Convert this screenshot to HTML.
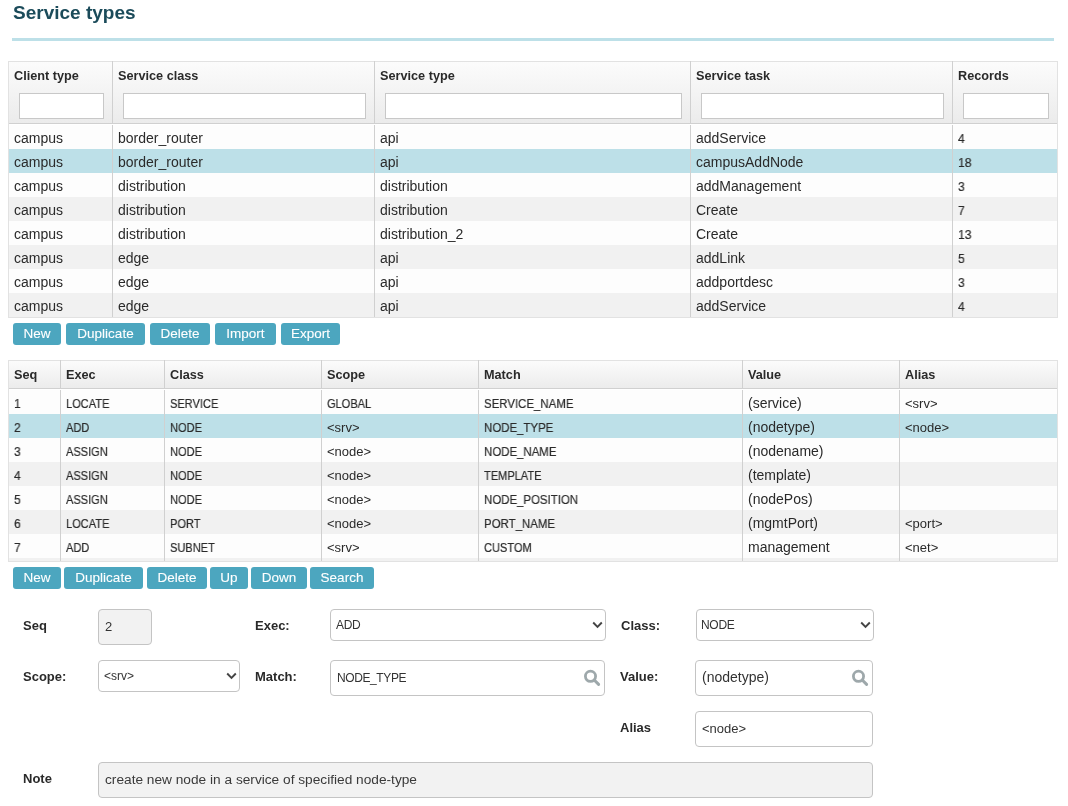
<!DOCTYPE html>
<html><head><meta charset="utf-8"><style>
html,body{margin:0;padding:0;background:#fff;width:1068px;height:806px;overflow:hidden;position:relative;}
body{font-family:"Liberation Sans",sans-serif;}
.a{position:absolute;}
.t{position:absolute;white-space:nowrap;line-height:20px;will-change:transform;}
.btn{position:absolute;height:22px;line-height:22px;background:#4ca6bf;color:#fff;border-radius:3px;text-align:center;font-size:13.5px;font-family:"Liberation Sans",sans-serif;-webkit-text-stroke:0.1px #fff;will-change:transform;}
</style></head><body>
<div class="t" style="left:13px;top:2.5px;font-size:19px;font-weight:bold;color:#1b4b5a;">Service types</div>
<div class="a" style="left:12px;top:38px;width:1042px;height:3px;background:#bde0e8;"></div>
<div class="a" style="left:8px;top:61px;width:1050px;height:63px;background:linear-gradient(#fcfcfc,#ebebeb);"></div>
<div class="a" style="left:8px;top:61px;width:1050px;height:1px;background:#e2e2e2;"></div>
<div class="a" style="left:8px;top:123px;width:1050px;height:1px;background:#d0d0d0;"></div>
<div class="a" style="left:8px;top:61px;width:1px;height:63px;background:#e2e2e2;"></div>
<div class="a" style="left:1057px;top:61px;width:1px;height:63px;background:#e2e2e2;"></div>
<div class="a" style="left:9px;top:124px;width:1048px;height:1px;background:#fff;"></div>
<div class="a" style="left:112px;top:61px;width:1px;height:63px;background:#d0d0d0;"></div>
<div class="a" style="left:374px;top:61px;width:1px;height:63px;background:#d0d0d0;"></div>
<div class="a" style="left:690px;top:61px;width:1px;height:63px;background:#d0d0d0;"></div>
<div class="a" style="left:952px;top:61px;width:1px;height:63px;background:#d0d0d0;"></div>
<div class="t" style="left:14px;top:66.0px;font-size:12.7px;font-weight:bold;color:#2a2a2a;">Client type</div>
<div class="a" style="left:19px;top:93px;width:85px;height:26px;background:#fff;border:1px solid #c8c8c8;box-sizing:border-box;"></div>
<div class="t" style="left:118px;top:66.0px;font-size:12.7px;font-weight:bold;color:#2a2a2a;">Service class</div>
<div class="a" style="left:123px;top:93px;width:243px;height:26px;background:#fff;border:1px solid #c8c8c8;box-sizing:border-box;"></div>
<div class="t" style="left:380px;top:66.0px;font-size:12.7px;font-weight:bold;color:#2a2a2a;">Service type</div>
<div class="a" style="left:385px;top:93px;width:297px;height:26px;background:#fff;border:1px solid #c8c8c8;box-sizing:border-box;"></div>
<div class="t" style="left:696px;top:66.0px;font-size:12.7px;font-weight:bold;color:#2a2a2a;">Service task</div>
<div class="a" style="left:701px;top:93px;width:243px;height:26px;background:#fff;border:1px solid #c8c8c8;box-sizing:border-box;"></div>
<div class="t" style="left:958px;top:66.0px;font-size:12.7px;font-weight:bold;color:#2a2a2a;">Records</div>
<div class="a" style="left:963px;top:93px;width:86px;height:26px;background:#fff;border:1px solid #c8c8c8;box-sizing:border-box;"></div>
<div class="a" style="left:8px;top:125px;width:1050px;height:24px;background:#fdfdfd;"></div>
<div class="t" style="left:14px;top:128.0px;font-size:14px;color:#2a2a2a;">campus</div>
<div class="t" style="left:118px;top:128.0px;font-size:14px;color:#2a2a2a;">border_router</div>
<div class="t" style="left:380px;top:128.0px;font-size:14px;color:#2a2a2a;">api</div>
<div class="t" style="left:696px;top:128.0px;font-size:14px;color:#2a2a2a;">addService</div>
<div class="t" style="left:958px;top:128.5px;font-size:13.5px;color:#2a2a2a;transform:scaleX(.9);transform-origin:0 0;-webkit-text-stroke:0.2px #2a2a2a;">4</div>
<div class="a" style="left:8px;top:149px;width:1050px;height:24px;background:#bde0e8;"></div>
<div class="t" style="left:14px;top:152.0px;font-size:14px;color:#2a2a2a;">campus</div>
<div class="t" style="left:118px;top:152.0px;font-size:14px;color:#2a2a2a;">border_router</div>
<div class="t" style="left:380px;top:152.0px;font-size:14px;color:#2a2a2a;">api</div>
<div class="t" style="left:696px;top:152.0px;font-size:14px;color:#2a2a2a;">campusAddNode</div>
<div class="t" style="left:958px;top:152.5px;font-size:13.5px;color:#2a2a2a;transform:scaleX(.9);transform-origin:0 0;-webkit-text-stroke:0.2px #2a2a2a;">18</div>
<div class="a" style="left:8px;top:173px;width:1050px;height:24px;background:#fdfdfd;"></div>
<div class="t" style="left:14px;top:176.0px;font-size:14px;color:#2a2a2a;">campus</div>
<div class="t" style="left:118px;top:176.0px;font-size:14px;color:#2a2a2a;">distribution</div>
<div class="t" style="left:380px;top:176.0px;font-size:14px;color:#2a2a2a;">distribution</div>
<div class="t" style="left:696px;top:176.0px;font-size:14px;color:#2a2a2a;">addManagement</div>
<div class="t" style="left:958px;top:176.5px;font-size:13.5px;color:#2a2a2a;transform:scaleX(.9);transform-origin:0 0;-webkit-text-stroke:0.2px #2a2a2a;">3</div>
<div class="a" style="left:8px;top:197px;width:1050px;height:24px;background:#f1f1f1;"></div>
<div class="t" style="left:14px;top:200.0px;font-size:14px;color:#2a2a2a;">campus</div>
<div class="t" style="left:118px;top:200.0px;font-size:14px;color:#2a2a2a;">distribution</div>
<div class="t" style="left:380px;top:200.0px;font-size:14px;color:#2a2a2a;">distribution</div>
<div class="t" style="left:696px;top:200.0px;font-size:14px;color:#2a2a2a;">Create</div>
<div class="t" style="left:958px;top:200.5px;font-size:13.5px;color:#2a2a2a;transform:scaleX(.9);transform-origin:0 0;-webkit-text-stroke:0.2px #2a2a2a;">7</div>
<div class="a" style="left:8px;top:221px;width:1050px;height:24px;background:#fdfdfd;"></div>
<div class="t" style="left:14px;top:224.0px;font-size:14px;color:#2a2a2a;">campus</div>
<div class="t" style="left:118px;top:224.0px;font-size:14px;color:#2a2a2a;">distribution</div>
<div class="t" style="left:380px;top:224.0px;font-size:14px;color:#2a2a2a;">distribution_2</div>
<div class="t" style="left:696px;top:224.0px;font-size:14px;color:#2a2a2a;">Create</div>
<div class="t" style="left:958px;top:224.5px;font-size:13.5px;color:#2a2a2a;transform:scaleX(.9);transform-origin:0 0;-webkit-text-stroke:0.2px #2a2a2a;">13</div>
<div class="a" style="left:8px;top:245px;width:1050px;height:24px;background:#f1f1f1;"></div>
<div class="t" style="left:14px;top:248.0px;font-size:14px;color:#2a2a2a;">campus</div>
<div class="t" style="left:118px;top:248.0px;font-size:14px;color:#2a2a2a;">edge</div>
<div class="t" style="left:380px;top:248.0px;font-size:14px;color:#2a2a2a;">api</div>
<div class="t" style="left:696px;top:248.0px;font-size:14px;color:#2a2a2a;">addLink</div>
<div class="t" style="left:958px;top:248.5px;font-size:13.5px;color:#2a2a2a;transform:scaleX(.9);transform-origin:0 0;-webkit-text-stroke:0.2px #2a2a2a;">5</div>
<div class="a" style="left:8px;top:269px;width:1050px;height:24px;background:#fdfdfd;"></div>
<div class="t" style="left:14px;top:272.0px;font-size:14px;color:#2a2a2a;">campus</div>
<div class="t" style="left:118px;top:272.0px;font-size:14px;color:#2a2a2a;">edge</div>
<div class="t" style="left:380px;top:272.0px;font-size:14px;color:#2a2a2a;">api</div>
<div class="t" style="left:696px;top:272.0px;font-size:14px;color:#2a2a2a;">addportdesc</div>
<div class="t" style="left:958px;top:272.5px;font-size:13.5px;color:#2a2a2a;transform:scaleX(.9);transform-origin:0 0;-webkit-text-stroke:0.2px #2a2a2a;">3</div>
<div class="a" style="left:8px;top:293px;width:1050px;height:24px;background:#f1f1f1;"></div>
<div class="t" style="left:14px;top:296.0px;font-size:14px;color:#2a2a2a;">campus</div>
<div class="t" style="left:118px;top:296.0px;font-size:14px;color:#2a2a2a;">edge</div>
<div class="t" style="left:380px;top:296.0px;font-size:14px;color:#2a2a2a;">api</div>
<div class="t" style="left:696px;top:296.0px;font-size:14px;color:#2a2a2a;">addService</div>
<div class="t" style="left:958px;top:296.5px;font-size:13.5px;color:#2a2a2a;transform:scaleX(.9);transform-origin:0 0;-webkit-text-stroke:0.2px #2a2a2a;">4</div>
<div class="a" style="left:8px;top:123px;width:1px;height:195px;background:#e2e2e2;"></div>
<div class="a" style="left:1057px;top:123px;width:1px;height:195px;background:#e2e2e2;"></div>
<div class="a" style="left:8px;top:317px;width:1050px;height:1px;background:#e2e2e2;"></div>
<div class="a" style="left:112px;top:125px;width:1px;height:192px;background:#d0d0d0;"></div>
<div class="a" style="left:374px;top:125px;width:1px;height:192px;background:#d0d0d0;"></div>
<div class="a" style="left:690px;top:125px;width:1px;height:192px;background:#d0d0d0;"></div>
<div class="a" style="left:952px;top:125px;width:1px;height:192px;background:#d0d0d0;"></div>
<div class="btn" style="left:13px;top:323px;width:48px;">New</div>
<div class="btn" style="left:66px;top:323px;width:79px;">Duplicate</div>
<div class="btn" style="left:150px;top:323px;width:60px;">Delete</div>
<div class="btn" style="left:215px;top:323px;width:61px;">Import</div>
<div class="btn" style="left:281px;top:323px;width:59px;">Export</div>
<div class="a" style="left:8px;top:360px;width:1050px;height:29px;background:linear-gradient(#fcfcfc,#ebebeb);"></div>
<div class="a" style="left:8px;top:360px;width:1050px;height:1px;background:#e2e2e2;"></div>
<div class="a" style="left:8px;top:388px;width:1050px;height:1px;background:#d0d0d0;"></div>
<div class="a" style="left:8px;top:360px;width:1px;height:29px;background:#e2e2e2;"></div>
<div class="a" style="left:1057px;top:360px;width:1px;height:29px;background:#e2e2e2;"></div>
<div class="a" style="left:9px;top:389px;width:1048px;height:1px;background:#fff;"></div>
<div class="a" style="left:60px;top:360px;width:1px;height:29px;background:#d0d0d0;"></div>
<div class="a" style="left:164px;top:360px;width:1px;height:29px;background:#d0d0d0;"></div>
<div class="a" style="left:321px;top:360px;width:1px;height:29px;background:#d0d0d0;"></div>
<div class="a" style="left:478px;top:360px;width:1px;height:29px;background:#d0d0d0;"></div>
<div class="a" style="left:742px;top:360px;width:1px;height:29px;background:#d0d0d0;"></div>
<div class="a" style="left:899px;top:360px;width:1px;height:29px;background:#d0d0d0;"></div>
<div class="t" style="left:14px;top:365.0px;font-size:12.7px;font-weight:bold;color:#2a2a2a;">Seq</div>
<div class="t" style="left:66px;top:365.0px;font-size:12.7px;font-weight:bold;color:#2a2a2a;">Exec</div>
<div class="t" style="left:170px;top:365.0px;font-size:12.7px;font-weight:bold;color:#2a2a2a;">Class</div>
<div class="t" style="left:327px;top:365.0px;font-size:12.7px;font-weight:bold;color:#2a2a2a;">Scope</div>
<div class="t" style="left:484px;top:365.0px;font-size:12.7px;font-weight:bold;color:#2a2a2a;">Match</div>
<div class="t" style="left:748px;top:365.0px;font-size:12.7px;font-weight:bold;color:#2a2a2a;">Value</div>
<div class="t" style="left:905px;top:365.0px;font-size:12.7px;font-weight:bold;color:#2a2a2a;">Alias</div>
<div class="a" style="left:8px;top:390px;width:1050px;height:24px;background:#fdfdfd;"></div>
<div class="t" style="left:14px;top:393.5px;font-size:13.5px;color:#2a2a2a;transform:scaleX(.9);transform-origin:0 0;-webkit-text-stroke:0.2px #2a2a2a;">1</div>
<div class="t" style="left:66px;top:393.5px;font-size:13px;color:#2a2a2a;transform:scaleX(0.85);transform-origin:0 0;-webkit-text-stroke:0.2px #2a2a2a;">LOCATE</div>
<div class="t" style="left:170px;top:393.5px;font-size:13px;color:#2a2a2a;transform:scaleX(0.85);transform-origin:0 0;-webkit-text-stroke:0.2px #2a2a2a;">SERVICE</div>
<div class="t" style="left:327px;top:393.5px;font-size:13px;color:#2a2a2a;transform:scaleX(0.85);transform-origin:0 0;-webkit-text-stroke:0.2px #2a2a2a;">GLOBAL</div>
<div class="t" style="left:484px;top:393.5px;font-size:13px;color:#2a2a2a;transform:scaleX(0.88);transform-origin:0 0;-webkit-text-stroke:0.2px #2a2a2a;">SERVICE_NAME</div>
<div class="t" style="left:748px;top:393.0px;font-size:14px;color:#2a2a2a;">(service)</div>
<div class="t" style="left:905px;top:393.5px;font-size:13px;color:#2a2a2a;">&lt;srv&gt;</div>
<div class="a" style="left:8px;top:414px;width:1050px;height:24px;background:#bde0e8;"></div>
<div class="t" style="left:14px;top:417.5px;font-size:13.5px;color:#2a2a2a;transform:scaleX(.9);transform-origin:0 0;-webkit-text-stroke:0.2px #2a2a2a;">2</div>
<div class="t" style="left:66px;top:417.5px;font-size:13px;color:#2a2a2a;transform:scaleX(0.85);transform-origin:0 0;-webkit-text-stroke:0.2px #2a2a2a;">ADD</div>
<div class="t" style="left:170px;top:417.5px;font-size:13px;color:#2a2a2a;transform:scaleX(0.85);transform-origin:0 0;-webkit-text-stroke:0.2px #2a2a2a;">NODE</div>
<div class="t" style="left:327px;top:417.5px;font-size:13px;color:#2a2a2a;">&lt;srv&gt;</div>
<div class="t" style="left:484px;top:417.5px;font-size:13px;color:#2a2a2a;transform:scaleX(0.88);transform-origin:0 0;-webkit-text-stroke:0.2px #2a2a2a;">NODE_TYPE</div>
<div class="t" style="left:748px;top:417.0px;font-size:14px;color:#2a2a2a;">(nodetype)</div>
<div class="t" style="left:905px;top:417.5px;font-size:13px;color:#2a2a2a;">&lt;node&gt;</div>
<div class="a" style="left:8px;top:438px;width:1050px;height:24px;background:#fdfdfd;"></div>
<div class="t" style="left:14px;top:441.5px;font-size:13.5px;color:#2a2a2a;transform:scaleX(.9);transform-origin:0 0;-webkit-text-stroke:0.2px #2a2a2a;">3</div>
<div class="t" style="left:66px;top:441.5px;font-size:13px;color:#2a2a2a;transform:scaleX(0.85);transform-origin:0 0;-webkit-text-stroke:0.2px #2a2a2a;">ASSIGN</div>
<div class="t" style="left:170px;top:441.5px;font-size:13px;color:#2a2a2a;transform:scaleX(0.85);transform-origin:0 0;-webkit-text-stroke:0.2px #2a2a2a;">NODE</div>
<div class="t" style="left:327px;top:441.5px;font-size:13px;color:#2a2a2a;">&lt;node&gt;</div>
<div class="t" style="left:484px;top:441.5px;font-size:13px;color:#2a2a2a;transform:scaleX(0.88);transform-origin:0 0;-webkit-text-stroke:0.2px #2a2a2a;">NODE_NAME</div>
<div class="t" style="left:748px;top:441.0px;font-size:14px;color:#2a2a2a;">(nodename)</div>
<div class="t" style="left:905px;top:441.0px;font-size:14px;color:#2a2a2a;"></div>
<div class="a" style="left:8px;top:462px;width:1050px;height:24px;background:#f1f1f1;"></div>
<div class="t" style="left:14px;top:465.5px;font-size:13.5px;color:#2a2a2a;transform:scaleX(.9);transform-origin:0 0;-webkit-text-stroke:0.2px #2a2a2a;">4</div>
<div class="t" style="left:66px;top:465.5px;font-size:13px;color:#2a2a2a;transform:scaleX(0.85);transform-origin:0 0;-webkit-text-stroke:0.2px #2a2a2a;">ASSIGN</div>
<div class="t" style="left:170px;top:465.5px;font-size:13px;color:#2a2a2a;transform:scaleX(0.85);transform-origin:0 0;-webkit-text-stroke:0.2px #2a2a2a;">NODE</div>
<div class="t" style="left:327px;top:465.5px;font-size:13px;color:#2a2a2a;">&lt;node&gt;</div>
<div class="t" style="left:484px;top:465.5px;font-size:13px;color:#2a2a2a;transform:scaleX(0.85);transform-origin:0 0;-webkit-text-stroke:0.2px #2a2a2a;">TEMPLATE</div>
<div class="t" style="left:748px;top:465.0px;font-size:14px;color:#2a2a2a;">(template)</div>
<div class="t" style="left:905px;top:465.0px;font-size:14px;color:#2a2a2a;"></div>
<div class="a" style="left:8px;top:486px;width:1050px;height:24px;background:#fdfdfd;"></div>
<div class="t" style="left:14px;top:489.5px;font-size:13.5px;color:#2a2a2a;transform:scaleX(.9);transform-origin:0 0;-webkit-text-stroke:0.2px #2a2a2a;">5</div>
<div class="t" style="left:66px;top:489.5px;font-size:13px;color:#2a2a2a;transform:scaleX(0.85);transform-origin:0 0;-webkit-text-stroke:0.2px #2a2a2a;">ASSIGN</div>
<div class="t" style="left:170px;top:489.5px;font-size:13px;color:#2a2a2a;transform:scaleX(0.85);transform-origin:0 0;-webkit-text-stroke:0.2px #2a2a2a;">NODE</div>
<div class="t" style="left:327px;top:489.5px;font-size:13px;color:#2a2a2a;">&lt;node&gt;</div>
<div class="t" style="left:484px;top:489.5px;font-size:13px;color:#2a2a2a;transform:scaleX(0.88);transform-origin:0 0;-webkit-text-stroke:0.2px #2a2a2a;">NODE_POSITION</div>
<div class="t" style="left:748px;top:489.0px;font-size:14px;color:#2a2a2a;">(nodePos)</div>
<div class="t" style="left:905px;top:489.0px;font-size:14px;color:#2a2a2a;"></div>
<div class="a" style="left:8px;top:510px;width:1050px;height:24px;background:#f1f1f1;"></div>
<div class="t" style="left:14px;top:513.5px;font-size:13.5px;color:#2a2a2a;transform:scaleX(.9);transform-origin:0 0;-webkit-text-stroke:0.2px #2a2a2a;">6</div>
<div class="t" style="left:66px;top:513.5px;font-size:13px;color:#2a2a2a;transform:scaleX(0.85);transform-origin:0 0;-webkit-text-stroke:0.2px #2a2a2a;">LOCATE</div>
<div class="t" style="left:170px;top:513.5px;font-size:13px;color:#2a2a2a;transform:scaleX(0.85);transform-origin:0 0;-webkit-text-stroke:0.2px #2a2a2a;">PORT</div>
<div class="t" style="left:327px;top:513.5px;font-size:13px;color:#2a2a2a;">&lt;node&gt;</div>
<div class="t" style="left:484px;top:513.5px;font-size:13px;color:#2a2a2a;transform:scaleX(0.88);transform-origin:0 0;-webkit-text-stroke:0.2px #2a2a2a;">PORT_NAME</div>
<div class="t" style="left:748px;top:513.0px;font-size:14px;color:#2a2a2a;">(mgmtPort)</div>
<div class="t" style="left:905px;top:513.5px;font-size:13px;color:#2a2a2a;">&lt;port&gt;</div>
<div class="a" style="left:8px;top:534px;width:1050px;height:24px;background:#fdfdfd;"></div>
<div class="t" style="left:14px;top:537.5px;font-size:13.5px;color:#2a2a2a;transform:scaleX(.9);transform-origin:0 0;-webkit-text-stroke:0.2px #2a2a2a;">7</div>
<div class="t" style="left:66px;top:537.5px;font-size:13px;color:#2a2a2a;transform:scaleX(0.85);transform-origin:0 0;-webkit-text-stroke:0.2px #2a2a2a;">ADD</div>
<div class="t" style="left:170px;top:537.5px;font-size:13px;color:#2a2a2a;transform:scaleX(0.85);transform-origin:0 0;-webkit-text-stroke:0.2px #2a2a2a;">SUBNET</div>
<div class="t" style="left:327px;top:537.5px;font-size:13px;color:#2a2a2a;">&lt;srv&gt;</div>
<div class="t" style="left:484px;top:537.5px;font-size:13px;color:#2a2a2a;transform:scaleX(0.85);transform-origin:0 0;-webkit-text-stroke:0.2px #2a2a2a;">CUSTOM</div>
<div class="t" style="left:748px;top:537.0px;font-size:14px;color:#2a2a2a;">management</div>
<div class="t" style="left:905px;top:537.5px;font-size:13px;color:#2a2a2a;">&lt;net&gt;</div>
<div class="a" style="left:8px;top:558px;width:1050px;height:3px;background:#f1f1f1;"></div>
<div class="a" style="left:8px;top:388px;width:1px;height:174px;background:#e2e2e2;"></div>
<div class="a" style="left:1057px;top:388px;width:1px;height:174px;background:#e2e2e2;"></div>
<div class="a" style="left:8px;top:561px;width:1050px;height:1px;background:#e2e2e2;"></div>
<div class="a" style="left:60px;top:390px;width:1px;height:171px;background:#d0d0d0;"></div>
<div class="a" style="left:164px;top:390px;width:1px;height:171px;background:#d0d0d0;"></div>
<div class="a" style="left:321px;top:390px;width:1px;height:171px;background:#d0d0d0;"></div>
<div class="a" style="left:478px;top:390px;width:1px;height:171px;background:#d0d0d0;"></div>
<div class="a" style="left:742px;top:390px;width:1px;height:171px;background:#d0d0d0;"></div>
<div class="a" style="left:899px;top:390px;width:1px;height:171px;background:#d0d0d0;"></div>
<div class="btn" style="left:13px;top:567px;width:48px;">New</div>
<div class="btn" style="left:64px;top:567px;width:79px;">Duplicate</div>
<div class="btn" style="left:147px;top:567px;width:60px;">Delete</div>
<div class="btn" style="left:210px;top:567px;width:38px;">Up</div>
<div class="btn" style="left:251px;top:567px;width:56px;">Down</div>
<div class="btn" style="left:310px;top:567px;width:64px;">Search</div>
<div class="t" style="left:23px;top:615.5px;font-size:13px;font-weight:bold;color:#2a2a2a;">Seq</div>
<div class="t" style="left:255px;top:615.5px;font-size:13px;font-weight:bold;color:#2a2a2a;">Exec:</div>
<div class="t" style="left:621px;top:615.5px;font-size:13px;font-weight:bold;color:#2a2a2a;">Class:</div>
<div class="t" style="left:23px;top:666.5px;font-size:13px;font-weight:bold;color:#2a2a2a;">Scope:</div>
<div class="t" style="left:255px;top:666.5px;font-size:13px;font-weight:bold;color:#2a2a2a;">Match:</div>
<div class="t" style="left:620px;top:666.5px;font-size:13px;font-weight:bold;color:#2a2a2a;">Value:</div>
<div class="t" style="left:620px;top:717.5px;font-size:13px;font-weight:bold;color:#2a2a2a;">Alias</div>
<div class="t" style="left:23px;top:768.5px;font-size:13px;font-weight:bold;color:#2a2a2a;">Note</div>
<div class="a" style="left:98px;top:609px;width:54px;height:36px;background:#f2f2f2;border:1px solid #c4c4c4;border-radius:4px;box-sizing:border-box;"></div>
<div class="t" style="left:105px;top:616.5px;font-size:13px;color:#333;">2</div>
<div class="a" style="left:330px;top:609px;width:276px;height:32px;background:#fff;border:1px solid #c4c4c4;border-radius:4px;box-sizing:border-box;"></div>
<div class="t" style="left:336px;top:615.0px;font-size:12px;color:#333;letter-spacing:-0.3px;">ADD</div>
<svg class="a" style="left:591.5px;top:621px" width="11" height="8" viewBox="0 0 11 8"><path d="M1.2 1.5 L5.5 5.8 L9.8 1.5" fill="none" stroke="#444" stroke-width="1.9"/></svg>
<div class="a" style="left:696px;top:609px;width:178px;height:32px;background:#fff;border:1px solid #c4c4c4;border-radius:4px;box-sizing:border-box;"></div>
<div class="t" style="left:701px;top:615.0px;font-size:12px;color:#333;letter-spacing:-0.3px;">NODE</div>
<svg class="a" style="left:859.5px;top:621px" width="11" height="8" viewBox="0 0 11 8"><path d="M1.2 1.5 L5.5 5.8 L9.8 1.5" fill="none" stroke="#444" stroke-width="1.9"/></svg>
<div class="a" style="left:98px;top:660px;width:142px;height:32px;background:#fff;border:1px solid #c4c4c4;border-radius:4px;box-sizing:border-box;"></div>
<div class="t" style="left:104px;top:666.0px;font-size:12px;color:#333;">&lt;srv&gt;</div>
<svg class="a" style="left:225.5px;top:672px" width="11" height="8" viewBox="0 0 11 8"><path d="M1.2 1.5 L5.5 5.8 L9.8 1.5" fill="none" stroke="#444" stroke-width="1.9"/></svg>
<div class="a" style="left:330px;top:660px;width:275px;height:36px;background:#fff;border:1px solid #c4c4c4;border-radius:4px;box-sizing:border-box;"></div>
<div class="t" style="left:337px;top:668.0px;font-size:12px;color:#333;letter-spacing:-0.4px;">NODE_TYPE</div>
<svg class="a" style="left:583px;top:669px" width="18" height="18" viewBox="0 0 18 18"><circle cx="7.5" cy="7.3" r="5.1" fill="none" stroke="#9ea8ab" stroke-width="2.8"/><path d="M11.2 11 L15.6 15.4" stroke="#9ea8ab" stroke-width="3" stroke-linecap="round"/></svg>
<div class="a" style="left:695px;top:660px;width:178px;height:36px;background:#fff;border:1px solid #c4c4c4;border-radius:4px;box-sizing:border-box;"></div>
<div class="t" style="left:702px;top:667.0px;font-size:14px;color:#333;">(nodetype)</div>
<svg class="a" style="left:851px;top:669px" width="18" height="18" viewBox="0 0 18 18"><circle cx="7.5" cy="7.3" r="5.1" fill="none" stroke="#9ea8ab" stroke-width="2.8"/><path d="M11.2 11 L15.6 15.4" stroke="#9ea8ab" stroke-width="3" stroke-linecap="round"/></svg>
<div class="a" style="left:695px;top:711px;width:178px;height:36px;background:#fff;border:1px solid #c4c4c4;border-radius:4px;box-sizing:border-box;"></div>
<div class="t" style="left:702px;top:718.5px;font-size:13px;color:#333;">&lt;node&gt;</div>
<div class="a" style="left:98px;top:762px;width:775px;height:36px;background:#f2f2f2;border:1px solid #c4c4c4;border-radius:4px;box-sizing:border-box;"></div>
<div class="t" style="left:105px;top:769.5px;font-size:13.7px;color:#3a3a3a;">create new node in a service of specified node-type</div>
</body></html>
